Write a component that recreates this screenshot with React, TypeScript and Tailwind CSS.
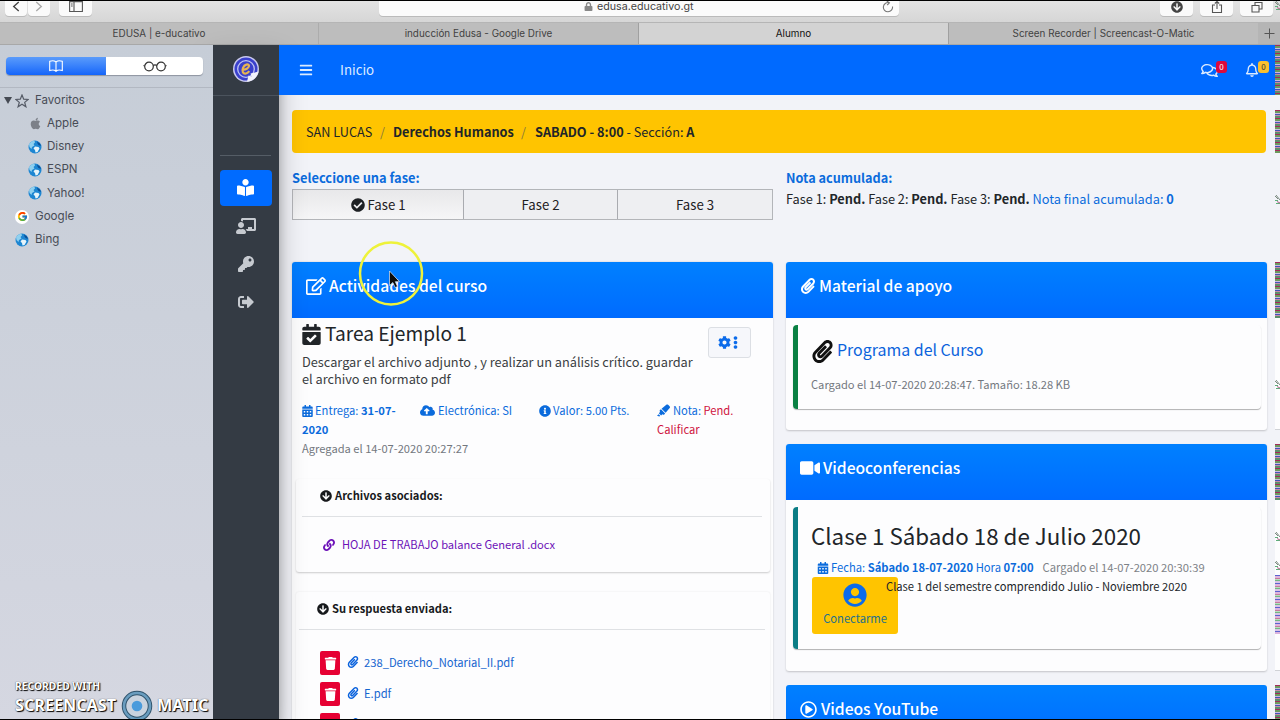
import React from "react";
import {
  FaBars, FaBookReader, FaChalkboardTeacher, FaKey, FaSignOutAlt, FaRegEdit, FaCalendarCheck, FaCog, FaEllipsisV,
  FaCalendarAlt, FaCloudUploadAlt, FaInfoCircle, FaHighlighter, FaArrowCircleDown, FaLink, FaTrash,
  FaPaperclip, FaVideo, FaRegPlayCircle, FaUserCircle, FaCheckCircle, FaRegComments, FaRegBell, FaApple, FaLock,
} from "react-icons/fa";
import { FcGoogle } from "react-icons/fc";

function Globe() {
  return (
    <svg viewBox="0 0 14 14" className="size-[14px] shrink-0">
      <circle cx="7" cy="7" r="6.5" fill="#1d86d2" />
      <path d="M1 4.5C2 2 4.500 .6 6.500 .7L7 2.500 5.500 4 6.500 5.500 4 7 3.500 9 1.500 7Z" fill="#8fd0ef" />
      <path d="M7 6.500L10.500 7 11.500 8.500 9.500 12 7.500 12.500 7 10 5.500 8.500Z" fill="#e6f4fa" />
      <path d="M9 1.500L12 3.500 12.800 6 10.500 5 9.500 3.500Z" fill="#0b4f96" />
    </svg>
  );
}

function Favorite({ icon, label, child }: { icon: React.ReactNode; label: string; child?: boolean }) {
  return (
    <div className={`flex h-[23.2px] items-center ${child ? "pl-[28px]" : "pl-[15px]"}`}>
      <span className="flex w-[14px] justify-center">{icon}</span>
      <span className={`text-[11.6px] text-[#474c56] ${child ? "ml-[5px]" : "ml-[6px]"}`}>{label}</span>
    </div>
  );
}

function CardHeader({ icon, title }: { icon: React.ReactNode; title: string }) {
  return (
    <div className="flex h-[56px] shrink-0 items-center rounded-t-[3px] bg-linear-to-b from-[#0080ff] to-[#006bff] pb-[8px] pl-[14px] text-[15.650px] font-medium text-white">
      {icon}
      <span className="whitespace-nowrap">{title}</span>
    </div>
  );
}

function FileRow({ name }: { name: string }) {
  return (
    <div className="flex h-[31px] items-start">
      <span className="flex h-[24px] w-[20px] items-center justify-center rounded-[2px] bg-[#e60033] text-white">
        <FaTrash className="size-[13px]" />
      </span>
      <FaPaperclip className="mt-[5px] ml-[7px] size-[12px] text-[#0a62dd]" />
      <span className="ml-[5px] text-[11.200px] leading-[22px] text-[#1565cf]">{name}</span>
    </div>
  );
}

/* Sliver of the next screen's text showing at the window's right edge. */
function EdgeMark() {
  return (
    <svg viewBox="0 0 5 9" className="h-[9px] w-[5px] shrink-0" fill="none" strokeWidth="1">
      <path d="M0 1L3 4M1 0L5 5" stroke="#7b8a80" />
      <path d="M0 5.500H3M1 8.500H5" stroke="#5fae7c" />
      <path d="M2 6.500L5 8" stroke="#b05c86" />
    </svg>
  );
}

const stripes =
  "w-full shrink-0 bg-[repeating-linear-gradient(180deg,#a32a5c_0px,#a32a5c_1px,#6c9a5c_1px,#6c9a5c_3px,#c8b8e0_3px,#c8b8e0_4px,#4455b8_4px,#4455b8_5px,#c98aa8_5px,#c98aa8_6px,#5d8f6a_6px,#5d8f6a_8px)]";
const paleStripes =
  "w-full shrink-0 bg-[repeating-linear-gradient(180deg,#5b62d0_0px,#5b62d0_1px,#dcb4dc_1px,#dcb4dc_3px,#c77aa0_3px,#c77aa0_4px,#b9dfc0_4px,#b9dfc0_5px,#74b884_5px,#74b884_6px,#d9c3e6_6px,#d9c3e6_8px)]";

export default function App() {
  return (
    <div className="relative flex h-[720px] w-[1280px] flex-col overflow-hidden border-y border-black bg-[#f2f3f8] font-['Noto_Sans_CJK_SC','Noto_Sans',sans-serif] leading-none">
      <div className="flex h-[21px] shrink-0 items-start bg-linear-to-b from-[#e3e3e3] to-[#d6d6d6] font-[Inter,sans-serif]">
        <div className="ml-[5px] flex h-[15px] w-[22px] items-start justify-center rounded-b-[4px] bg-[#fafafa] shadow-[0_1px_0_#bbb]">
          <svg viewBox="0 0 8 12" className="h-[11px] w-[8px]" fill="none" stroke="#444" strokeWidth="1.5"><path d="M7 1L1.500 6L7 11" /></svg>
        </div>
        <div className="ml-[1px] flex h-[15px] w-[22px] items-start justify-center rounded-b-[4px] bg-[#fafafa] shadow-[0_1px_0_#bbb]">
          <svg viewBox="0 0 8 12" className="h-[11px] w-[8px]" fill="none" stroke="#aaa" strokeWidth="1.5"><path d="M1 1L6.500 6L1 11" /></svg>
        </div>
        <div className="ml-[9px] flex h-[15px] w-[33px] items-start justify-center rounded-b-[4px] bg-[#fafafa] shadow-[0_1px_0_#bbb]">
          <svg viewBox="0 0 14 12" className="h-[12px] w-[14px]" fill="none" stroke="#555" strokeWidth="1.100"><path d="M.6 .6H13.400V10.500H.6ZM5 .6V10.500M2 3H3.700M2 5H3.700" /></svg>
        </div>
        <div className="ml-[287px] flex h-[15px] w-[520px] items-start rounded-b-[4px] bg-[#fbfbfb] shadow-[0_1px_0_#bbb]">
          <FaLock className="mt-[1px] ml-[205px] size-[9px] text-[#888]" />
          <span className="ml-[4px] w-[97px] text-[10.700px] leading-[12px] whitespace-nowrap text-[#444]">edusa.educativo.gt</span>
          <svg viewBox="0 0 12 12" className="ml-[188px] size-[12px]" fill="none" stroke="#777" strokeWidth="1.100"><path d="M10.500 5.500A4.600 4.600 0 1 1 7 1.700M4.800 0L7.400 1.800L5.200 4" /></svg>
        </div>
        <div className="ml-[261px] flex h-[15px] w-[33px] items-start justify-center rounded-b-[4px] bg-[#fafafa] shadow-[0_1px_0_#bbb]">
          <FaArrowCircleDown className="size-[12px] text-[#444]" />
        </div>
        <div className="ml-[7px] flex h-[15px] w-[33px] items-start justify-center rounded-b-[4px] bg-[#fafafa] shadow-[0_1px_0_#bbb]">
          <svg viewBox="0 0 12 13" className="h-[13px] w-[12px]" fill="none" stroke="#555" strokeWidth="1.100"><path d="M4 4H1.500V11.500H10.500V4H8M6 8V.5M3.800 2.500L6 .5L8.200 2.500" /></svg>
        </div>
        <div className="ml-[7px] flex h-[15px] w-[33px] items-start justify-center rounded-b-[4px] bg-[#fafafa] shadow-[0_1px_0_#bbb]">
          <svg viewBox="0 0 12 13" className="h-[13px] w-[12px]" fill="none" stroke="#555" strokeWidth="1.100"><path d="M1 4.500H8V11H1ZM4 4V1.500H11V8H8.500" /></svg>
        </div>
        <div className="ml-[2px]"><EdgeMark /></div>
      </div>
      <div className="flex h-[23px] shrink-0 border-t border-b border-t-[#b5b5b5] border-b-[#a8a8a8] bg-[#bdbdbd] font-[Inter,sans-serif] text-[9.900px] text-[#424242]">
        <div className="flex w-[319px] items-center justify-center border-r border-[#acacac]"><span>EDUSA | e-ducativo</span></div>
        <div className="flex w-[320px] items-center justify-center border-r border-[#a0a0a0]"><span>inducción Edusa - Google Drive</span></div>
        <div className="flex w-[310px] items-center justify-center border-r border-[#a0a0a0] bg-[#d3d3d3] text-[#111]"><span>Alumno</span></div>
        <div className="flex w-[309px] items-center justify-center"><span>Screen Recorder | Screencast-O-Matic</span></div>
        <div className="flex flex-1 items-center justify-center bg-[#b5b5b5]">
          <svg viewBox="0 0 11 11" className="size-[11px]" stroke="#555" strokeWidth="1"><path d="M5.500 .5V10.500M.5 5.500H10.500" /></svg>
        </div>
      </div>

      <div className="flex min-h-0 flex-1">
        <aside className="z-20 flex w-[213px] shrink-0 flex-col bg-linear-to-b from-[#c6cdd7] to-[#d5d7e1] font-[Inter,sans-serif]">
          <div className="flex h-[43px] shrink-0 items-start border-b border-[#b2b8c2] pt-[12px] pl-[6px]">
            <div className="flex h-[18px] w-[100px] items-center justify-center rounded-l-[4px] bg-linear-to-b from-[#5a9bfb] to-[#1264fa] shadow-[0_1px_1px_#8d94a0]">
              <svg viewBox="0 0 14 12" className="h-[12px] w-[14px]" fill="none" stroke="#fff" strokeWidth="1.100"><path d="M7 2C5.500 .7 3 .5 .7 1.300V10.500C3 9.800 5.500 10 7 11.200C8.500 10 11 9.800 13.300 10.500V1.300C11 .5 8.500 .7 7 2ZM7 2V11" /></svg>
            </div>
            <div className="flex h-[18px] w-[97px] items-center justify-center rounded-r-[4px] bg-white shadow-[0_1px_1px_#8d94a0]">
              <svg viewBox="0 0 24 11" className="h-[11px] w-[24px]" fill="none" stroke="#333" strokeWidth="1.200"><circle cx="6" cy="5.500" r="4.300" /><circle cx="18" cy="5.500" r="4.300" /><path d="M10.200 4.500Q12 3.300 13.800 4.500M1.700 5L.5 4.500M22.300 5L23.500 4.500" /></svg>
            </div>
          </div>
          <div className="mt-[1px] flex h-[23.200px] items-center pl-[4px]">
            <svg viewBox="0 0 8 7" className="h-[7px] w-[8px]"><path d="M0 0H8L4 7Z" fill="#454a53" /></svg>
            <svg viewBox="0 0 14 14" className="ml-[3px] size-[14px]" fill="none" stroke="#555b66" strokeWidth="1.200"><path d="M7 1L8.700 5.200L13.200 5.500L9.700 8.400L10.900 12.800L7 10.300L3.100 12.800L4.300 8.400L.8 5.500L5.300 5.200Z" /></svg>
            <span className="ml-[6px] text-[11.500px] text-[#474c56]">Favoritos</span>
          </div>
          <Favorite child icon={<FaApple className="size-[13px] text-[#7c8088]" />} label="Apple" />
          <Favorite child icon={<Globe />} label="Disney" />
          <Favorite child icon={<Globe />} label="ESPN" />
          <Favorite child icon={<Globe />} label="Yahoo!" />
          <Favorite icon={<span className="flex size-[14px] shrink-0 items-center justify-center rounded-full bg-white"><FcGoogle className="size-[11px]" /></span>} label="Google" />
          <Favorite icon={<Globe />} label="Bing" />
          <div className="mt-auto pl-[15px] font-['Noto_Sans',sans-serif] font-bold text-white [text-shadow:1px_1px_1px_#000,0_0_1px_#333]">
            <div className="text-[10.300px] leading-[12px] whitespace-nowrap">RECORDED WITH</div>
            <div className="flex h-[27px] items-center text-[16.200px] whitespace-nowrap">
              <span className="w-[106px]">SCREENCAST</span>
              <svg viewBox="0 0 32 32" className="size-[32px] shrink-0"><circle cx="16" cy="16" r="13" fill="#c9d3df" stroke="#2f536c" strokeWidth="4.500" /><circle cx="16" cy="16" r="13" fill="none" stroke="#6a9dbf" strokeWidth="2.600" /><circle cx="16" cy="16" r="5.300" fill="#4a9bdc" /></svg>
              <span className="ml-[4px]">MATIC</span>
            </div>
          </div>
        </aside>

        <nav className="z-10 flex w-[66px] shrink-0 flex-col items-center bg-[#343b44] pr-px shadow-[0_14px_28px_rgba(0,0,0,0.25),0_10px_10px_rgba(0,0,0,0.22)]">
          <div className="-mr-px flex h-[51px] w-[66px] shrink-0 items-start justify-center border-b border-[#4b535d] pt-[10px] pr-px">
            <svg viewBox="0 0 28 28" className="size-[28px]">
              <circle cx="14" cy="14" r="13" fill="#c9c9ee" />
              <circle cx="14" cy="14" r="11.500" fill="#3a40cc" />
              <circle cx="14" cy="14" r="8.300" fill="none" stroke="#bfc3f3" strokeWidth="1.300" />
              <path d="M10.500 14.500C14 14.800 17.500 12.800 17 10.600C16.500 8.600 12.500 9.200 11 12.800C9.600 16.500 11 19 14 18.500C15.500 18.200 16.500 17.300 17.300 16.200" fill="none" stroke="#e7b452" strokeWidth="2.200" />
              <path d="M15 26.800L16.500 20.500L19.500 21.500L18.500 18.500L26.500 16.500C25.500 22 21 26 15 26.800Z" fill="#f2f2fb" />
            </svg>
          </div>
          <div className="h-[60px] w-[51px] shrink-0 border-b border-[#555d66]" />
          <div className="mt-[14px] flex h-[36px] w-[52px] shrink-0 items-center justify-center rounded-[4px] bg-[#006bff] pb-px text-white"><FaBookReader className="size-[17px]" /></div>
          <div className="mt-[2px] flex h-[35px] items-center text-[#c6cad0]"><FaChalkboardTeacher className="size-[20px]" /></div>
          <div className="mt-[3px] flex h-[35px] items-center text-[#c6cad0]"><FaKey className="size-[16px]" /></div>
          <div className="mt-[3px] flex h-[35px] items-center text-[#c6cad0]"><FaSignOutAlt className="size-[16px]" /></div>
        </nav>

        <main className="flex min-w-0 flex-1 flex-col">
          <header className="z-20 flex h-[50px] shrink-0 items-center bg-[#006aff] pl-[20px] text-[#dcebff]">
            <FaBars className="size-[14px]" />
            <span className="ml-[27px] w-[34px] text-[13.300px]">Inicio</span>
            <FaRegComments className="ml-[827px] size-[17px]" />
            <span className="mb-[7px] -ml-[2px] flex h-[12px] w-[11px] items-center justify-center rounded-[3px] bg-[#dc0a3c] text-[8px] text-white">0</span>
            <FaRegBell className="ml-[18px] size-[14px]" />
            <span className="mb-[7px] -ml-[1px] flex h-[12px] w-[11px] items-center justify-center rounded-[3px] bg-[#fbc02d] text-[8px] text-[#333]">0</span>
          </header>

          <div className="mt-[15px] ml-[13px] flex h-[43px] w-[974px] shrink-0 items-center rounded-[4px] bg-[#ffc400] pt-[2px] pl-[14px] text-[12.700px] whitespace-pre text-[#212529]">
            <span className="w-[67px]">SAN LUCAS</span>
            <span className="ml-[7px] text-[#8a7a3c]">/</span>
            <b className="ml-[8px] w-[121px]">Derechos Humanos</b>
            <span className="ml-[7px] text-[#8a7a3c]">/</span>
            <span className="ml-[9px]"><b>SABADO - 8:00</b> - Sección: <b>A</b></span>
          </div>

          <div className="mt-[18px] ml-[13px] flex h-[91px] shrink-0">
            <div className="w-[481px]">
              <div className="text-[12.850px] leading-[14px] font-bold text-[#0b6bdc]">Seleccione una fase:</div>
              <div className="mt-[4px] flex h-[31px] border border-[#b3b5b9] bg-[#eeeff2] text-[13.200px] text-[#1d2023]">
                <div className="flex w-[171px] items-center justify-center gap-[3px] border-r border-[#a9abb0] bg-linear-to-b from-[#e8e8ea] to-[#f6f6f7]"><FaCheckCircle className="size-[14px]" />Fase 1</div>
                <div className="flex w-[154px] items-center justify-center border-r border-[#a9abb0]">Fase 2</div>
                <div className="flex flex-1 items-center justify-center">Fase 3</div>
              </div>
            </div>
            <div className="ml-[13px] text-[12.700px] whitespace-nowrap text-[#212529]">
              <div className="leading-[14px] font-bold text-[#0b6bdc]">Nota acumulada:</div>
              <div className="mt-[5px] text-[12.770px] leading-[18px]">Fase 1: <b>Pend.</b> Fase 2: <b>Pend.</b> Fase 3: <b>Pend.</b> <span className="text-[#0b6bdc]">Nota final acumulada: <b>0</b></span></div>
            </div>
          </div>

          <div className="ml-[13px] flex min-h-0 flex-1 items-start">
            <section className="h-[500px] w-[481px] shrink-0 rounded-[3px] bg-[#fdfdfe] shadow-[0_0_2px_rgba(0,0,0,0.2)]">
              <CardHeader icon={<FaRegEdit className="mr-[3px] size-[20px]" />} title="Actividades del curso" />
              <div className="flex h-[156px] flex-col pl-[10px] text-[#212529]">
                <div className="flex items-start">
                  <div className="w-[406px] whitespace-nowrap">
                    <div className="mt-[3px] flex h-[26px] items-center text-[19.150px]"><FaCalendarCheck className="mr-[4px] size-[21px] w-[19px]" />Tarea Ejemplo 1</div>
                    <div className="mt-[6px] text-[12.750px] leading-[17px] text-[#3a3e42]">Descargar el archivo adjunto , y realizar un análisis crítico. guardar<br />el archivo en formato pdf</div>
                  </div>
                  <div className="mt-[9px] flex h-[31px] w-[43px] items-center justify-center rounded-[3px] border border-[#dcdfe4] bg-[#f6f7fb] text-[#0b6bea]"><FaCog className="ml-[1px] size-[13px]" /><FaEllipsisV className="-ml-[2px] size-[13px]" /></div>
                </div>
                <div className="mt-[14px] flex text-[11.200px] leading-[18.500px] whitespace-nowrap text-[#0b6bdc]">
                  <div className="w-[118px]"><FaCalendarAlt className="mr-[2px] mb-[2px] inline size-[12px] w-[11px]" />Entrega: <b>31-07-<br />2020</b></div>
                  <div className="w-[119px]"><FaCloudUploadAlt className="mr-[3px] mb-[2px] inline size-[15px]" />Electrónica: SI</div>
                  <div className="w-[118px]"><FaInfoCircle className="mr-[2px] mb-[2px] inline size-[12px]" />Valor: 5.00 Pts.</div>
                  <div><FaHighlighter className="mr-[3px] mb-[2px] inline size-[13px]" />Nota: <span className="text-[#cf1440]">Pend.<br />Calificar</span></div>
                </div>
                <div className="mt-[1px] text-[11.150px] leading-[18px] text-[#73787e]">Agregada el 14-07-2020 20:27:27</div>
              </div>
              <div className="mt-[5px] ml-[4px] h-[93px] w-[474px] rounded-[3px] px-[6px] shadow-[0_1px_2px_rgba(0,0,0,0.2)]">
                <div className="flex h-[38px] w-[460px] items-center border-b border-[#dfe1e4] pb-[3px] pl-[18px] text-[11.150px] font-bold text-[#17191c]"><FaArrowCircleDown className="mr-[3px] size-[12px]" />Archivos asociados:</div>
                <div className="flex h-[55px] items-center pl-[21px] text-[11.150px] text-[#6c12b8]"><FaLink className="mr-[7px] size-[12px]" />HOJA DE TRABAJO balance General .docx</div>
              </div>
              <div className="mt-[20px] ml-[4px] h-[200px] w-[474px] rounded-[3px] px-[3px] shadow-[0_0_2px_rgba(0,0,0,0.1)]">
                <div className="flex h-[38px] w-[466px] items-center border-b border-[#dfe1e4] pb-[3px] pl-[18px] text-[11.150px] font-bold text-[#17191c]"><FaArrowCircleDown className="mr-[3px] size-[12px]" />Su respuesta enviada:</div>
                <div className="pt-[21px] pl-[21px]">
                  <FileRow name="238_Derecho_Notarial_II.pdf" />
                  <FileRow name="E.pdf" />
                  <FileRow name="" />
                </div>
              </div>
            </section>

            <div className="ml-[13px] flex w-[481px] shrink-0 flex-col gap-[14px]">
              <section className="h-[168px] shrink-0 rounded-[3px] bg-[#fdfdfe] shadow-[0_1px_2px_rgba(0,0,0,0.2)]">
                <CardHeader icon={<FaPaperclip className="mr-[3px] size-[16px]" />} title="Material de apoyo" />
                <div className="mt-[7px] ml-[7px] h-[84px] w-[468px] rounded-[4px] border-l-[5px] border-[#0a8043] pl-[13px] shadow-[0_1px_1px_rgba(0,0,0,0.3)]">
                  <div className="flex h-[52px] items-center pb-[3px] text-[15.950px] text-[#0b63dc]"><FaPaperclip className="mt-[3px] mr-[3px] size-[23px] text-[#111]" />Programa del Curso</div>
                  <div className="text-[11.150px] leading-[14px] text-[#73787e]">Cargado el 14-07-2020 20:28:47. Tamaño: 18.28 KB</div>
                </div>
              </section>
              <section className="h-[227px] shrink-0 rounded-[3px] bg-[#fdfdfe] shadow-[0_1px_2px_rgba(0,0,0,0.2)]">
                <CardHeader icon={<FaVideo className="mr-[3px] size-[20px]" />} title="Videoconferencias" />
                <div className="mt-[7px] ml-[7px] h-[142px] w-[468px] rounded-[4px] border-l-[5px] border-[#0b7d85] pl-[14px] shadow-[0_1px_1px_rgba(0,0,0,0.3)]">
                  <div className="-ml-px flex h-[52px] items-center pt-[5px] text-[22.350px] whitespace-nowrap text-[#212529]">Clase 1 Sábado 18 de Julio 2020</div>
                  <div className="flex h-[18px] items-center pl-[5px] text-[11.230px] whitespace-pre text-[#0b6bdc]"><FaCalendarAlt className="mr-[2px] size-[12px]" /><span>Fecha: <b>Sábado 18-07-2020</b> Hora <b>07:00</b></span><span className="ml-[9px] text-[#7d8287]">Cargado el 14-07-2020 20:30:39</span></div>
                  <div className="flex">
                    <div className="flex h-[57px] w-[86px] flex-col items-center rounded-[3px] bg-[#ffc400] pt-[6px] text-[11.200px] text-[#24708c]"><FaUserCircle className="size-[24px] text-[#0b6bea]" /><span className="mt-[6px]">Conectarme</span></div>
                    <div className="-ml-[12px] pt-[4px] text-[11.200px] whitespace-nowrap text-[#212529]">Clase 1 del semestre comprendido Julio - Noviembre 2020</div>
                  </div>
                </div>
              </section>
              <section className="shrink-0"><CardHeader icon={<FaRegPlayCircle className="mr-[4px] size-[17px]" />} title="Videos YouTube" /></section>
            </div>
          </div>
        </main>

        <div className="flex w-[5px] shrink-0 flex-col overflow-hidden bg-[#f2f3f8]">
          <div className={`h-[50px] ${stripes}`} />
          <div className={`mt-[15px] h-[43px] ${stripes}`} />
          <div className="flex h-[109px] shrink-0 flex-col pt-[42px]"><EdgeMark /></div>
          <div className={`h-[56px] ${stripes}`} />
          <div className="flex h-[112px] shrink-0 flex-col border-b border-[#d0d2d6] bg-[#fdfdfe] pt-[62px]"><EdgeMark /></div>
          <div className={`mt-[14px] h-[56px] ${stripes}`} />
          <div className="flex h-[75px] shrink-0 flex-col gap-[20px] bg-[#fdfdfe] pt-[32px]"><EdgeMark /><EdgeMark /></div>
          <div className={`h-[59px] ${paleStripes}`} />
          <div className="h-[37px] shrink-0 border-b border-[#d0d2d6] bg-[#fdfdfe]" />
          <div className={`mt-[14px] h-[56px] ${stripes}`} />
        </div>
      </div>

      <svg viewBox="0 0 66 66" className="pointer-events-none absolute top-[240px] left-[358px] z-30 size-[66px]">
        <circle cx="33" cy="32.500" r="31" fill="none" stroke="#eef23a" strokeWidth="2.500" />
        <path d="M31.500 30V44.500L34.800 41.500L37.200 46.500L39.500 45.500L37.300 40.700H41.500Z" fill="#0b0b0b" stroke="#dfe8f5" strokeWidth=".7" />
      </svg>
    </div>
  );
}
